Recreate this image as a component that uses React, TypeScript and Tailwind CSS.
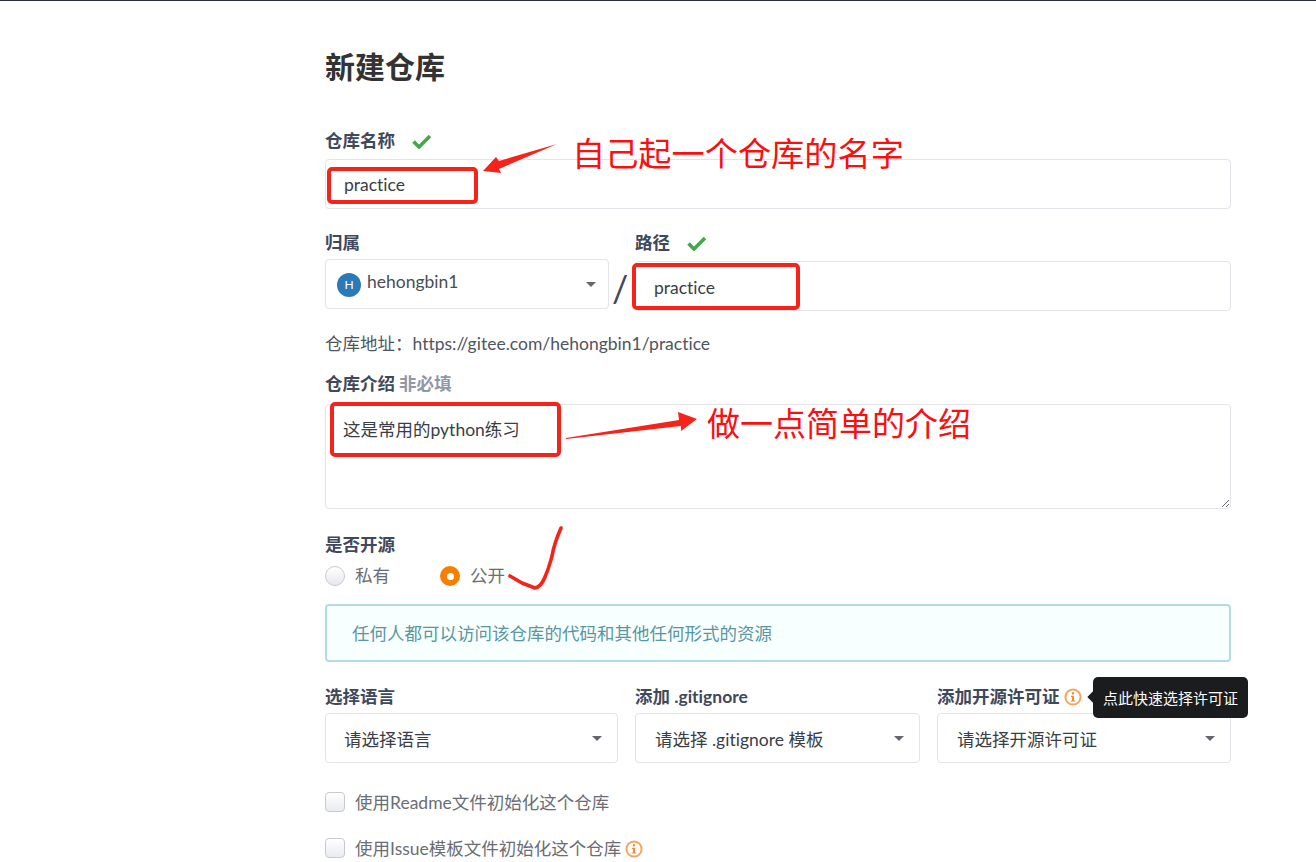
import React from 'react';

const fontStack = { fontFamily: 'Lato, "Noto Sans CJK SC", sans-serif', fontVariantLigatures: 'none' };

const Label: React.FC<{ children: React.ReactNode; className?: string }> = ({ children, className = '' }) => (
  <div className={`h-5 flex items-center text-[17.5px] leading-5 font-bold text-[#40485b] ${className}`}>{children}</div>
);

const Tick = () => (
  <svg width="20" height="15" viewBox="0 0 20 15" className="ml-[17px]">
    <path d="M1.5 7.5 L7 13 L18 2" fill="none" stroke="#45a84c" strokeWidth="3.6" />
  </svg>
);

const Caret = () => <div className="w-0 h-0 border-x-[5px] border-x-transparent border-t-[5px] border-t-[#63666d]" />;

const InfoIcon = () => (
  <svg width="18" height="18" viewBox="0 0 18 18">
    <circle cx="9" cy="9" r="7.6" fill="#fff" stroke="#f7a45f" strokeWidth="2" />
    <rect x="7.9" y="4.2" width="2.2" height="2.2" fill="#f28c38" />
    <path d="M6.9 7.8 H10 V12.4 H11.2 V13.6 H6.9 V12.4 H8 V9 H6.9 Z" fill="#f28c38" />
  </svg>
);

const SelectBox: React.FC<{ text: string; className: string }> = ({ text, className }) => (
  <div className={`h-[50px] border border-[#e3e3e9] rounded-[4px] bg-white flex items-center justify-between pr-[15px] text-[17.5px] text-[#3a3d45] ${className}`}>
    <span className="mt-1">{text}</span>
    <Caret />
  </div>
);

const CheckRow: React.FC<{ children: React.ReactNode; className: string }> = ({ children, className }) => (
  <div className={`h-5 flex items-center text-[17.5px] text-[#6a6d74] ${className}`}>
    <div className="w-5 h-5 rounded-[4px] border border-[#c9cad0] bg-gradient-to-b from-white to-[#e9ebf0] mr-[10px]" />
    <span className="flex items-center mt-0.5">{children}</span>
  </div>
);

export default function App() {
  return (
    <div className="relative w-[1316px] h-[862px] overflow-hidden bg-white" style={fontStack}>
      <div className="h-px bg-[#2b2f3a]" />

      <div className="ml-[325px] w-[906px]">
        <h1 className="mt-[45px] h-10 leading-10 text-[30px] font-bold text-[#333333]">新建仓库</h1>

        <Label className="mt-[45px]">
          仓库名称
          <Tick />
        </Label>
        <div className="mt-2 h-[50px] border border-[#e3e3e9] rounded-[4px] flex items-center pl-[18px] pt-0.5 text-[17.5px] text-[#3a3d45]">
          practice
        </div>

        {/* 归属 / 路径 */}
        <div className="mt-6 flex">
          <div className="w-[284px]">
            <Label>归属</Label>
            <div className="mt-1.5 h-[50px] border border-[#e3e3e9] rounded-[4px] flex items-center justify-between pl-[11px] pr-[12px]">
              <div className="flex items-center gap-[6px] text-[17.5px] text-[#4a4d55] -mt-px">
                <div className="w-6 h-6 rounded-full bg-[#2a7ab8] text-white text-xs flex items-center justify-center mt-0.5">H</div>
                <span className="-mt-0.5">hehongbin1</span>
              </div>
              <Caret />
            </div>
          </div>
          <div className="w-[26px] pl-[3px] pt-[33px] text-[36px] leading-[44px] text-[#40485b]">/</div>
          <div className="w-[596px]">
            <Label>
              路径
              <Tick />
            </Label>
            <div className="mt-2 h-[50px] border border-[#e3e3e9] rounded-[4px] flex items-center pl-[18px] pt-1 text-[17.5px] text-[#3a3d45]">
              practice
            </div>
          </div>
        </div>

        <div className="mt-[23px] h-5 leading-5 text-[17.5px] text-[#4f5561]">仓库地址：https://gitee.com/hehongbin1/practice</div>

        <Label className="mt-5">
          仓库介绍<span className="ml-1 text-[#9097a8]">非必填</span>
        </Label>
        <div className="mt-[10px] h-[105px] border border-[#e3e3e9] rounded-[4px] pl-[17px] pt-[12px] text-[17.5px] text-[#3a3d45] resize overflow-auto">
          这是常用的python练习
        </div>

        <Label className="mt-[26px]">是否开源</Label>
        <div className="mt-[11px] h-5 flex items-center text-[17.5px] text-[#6a6d74]">
          <div className="w-5 h-5 rounded-full border border-[#c9cad0] bg-gradient-to-b from-white to-[#e6e8ee] mr-[10px]" />
          <span>私有</span>
          <div className="ml-[50px] w-5 h-5 rounded-full bg-[#f77f00] flex items-center justify-center mr-[10px]">
            <div className="w-[7px] h-[7px] rounded-full bg-white" />
          </div>
          <span>公开</span>
        </div>

        <div className="mt-[18px] h-[58px] border-2 border-[#b3dbe3] rounded-[4px] bg-[#f8ffff] flex items-center pl-[25px] pt-0.5 text-[17.5px] text-[#5a95a2]">
          任何人都可以访问该仓库的代码和其他任何形式的资源
        </div>

        {/* 语言 / gitignore / 许可证 */}
        <div className="mt-[25px] flex">
          <div className="w-[293px]">
            <Label>选择语言</Label>
            <SelectBox text="请选择语言" className="mt-1.5 pl-[18px]" />
          </div>
          <div className="w-[285px] ml-[17px]">
            <Label>添加 .gitignore</Label>
            <SelectBox text="请选择 .gitignore 模板" className="mt-1.5 pl-[19px]" />
          </div>
          <div className="w-[294px] ml-[17px]">
            <Label className="relative">
              添加开源许可证
              <span className="ml-1 flex">
                <InfoIcon />
              </span>
              <div className="absolute left-[156px] top-[-10px] w-[155px] h-[41px] rounded-[5px] bg-[#1b1c1d] flex items-center justify-center text-[15px] font-normal text-white">
                <div className="absolute left-[-4px] top-4 w-2 h-2 rotate-45 bg-[#1b1c1d]" />
                点此快速选择许可证
              </div>
            </Label>
            <SelectBox text="请选择开源许可证" className="mt-1.5 pl-[19px]" />
          </div>
        </div>

        <CheckRow className="mt-[29px]">使用Readme文件初始化这个仓库</CheckRow>
        <CheckRow className="mt-[26px]">
          使用Issue模板文件初始化这个仓库
          <span className="ml-1 flex">
            <InfoIcon />
          </span>
        </CheckRow>
      </div>

      {/* 红色标注 */}
      <div className="absolute left-[327px] top-[167px] w-[151px] h-[37px] border-4 border-[#f5231a] rounded-[5px]" />
      <div className="absolute left-[632px] top-[263px] w-[168px] h-[47px] border-4 border-[#f5231a] rounded-[5px]" />
      <div className="absolute left-[330px] top-[402px] w-[231px] h-[55px] border-4 border-[#f5231a] rounded-[5px]" />
      <div className="absolute left-[572px] top-[130px] h-[46px] leading-[46px] text-[33.2px] text-[#fb0f0f] whitespace-nowrap">自己起一个仓库的名字</div>
      <div className="absolute left-[707px] top-[400px] h-[46px] leading-[46px] text-[33px] text-[#fb0f0f] whitespace-nowrap">做一点简单的介绍</div>
      <svg className="absolute left-0 top-0 pointer-events-none" width="1316" height="862" viewBox="0 0 1316 862">
        <polygon points="557,144 499,161 496,157 483,171 501,173 499,169" fill="#f5231a" />
        <polygon points="566,438 679,420 678,412 697,419 681,431 681,426 566,439" fill="#f5231a" />
        <path d="M510 576 L522 583 L535 588 C540 587 543 582 545 577 C549 568 550 563 552 556 C554 545 557 537 561 528" fill="none" stroke="#f5231a" strokeWidth="3.6" strokeLinecap="round" strokeLinejoin="round" />
      </svg>
    </div>
  );
}
